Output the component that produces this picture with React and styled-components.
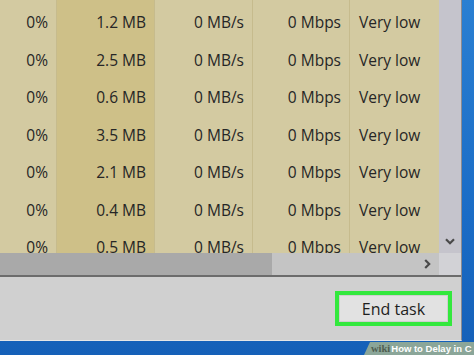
import React from 'react';
import styled, { createGlobalStyle } from 'styled-components';

const GlobalStyle = createGlobalStyle`
  html, body {
    margin: 0;
    padding: 0;
    overflow: hidden;
    background: #1a6cc6;
  }
`;

const rows = [
    { cpu: '0%', mem: '1.2 MB' },
    { cpu: '0%', mem: '2.5 MB' },
    { cpu: '0%', mem: '0.6 MB' },
    { cpu: '0%', mem: '3.5 MB' },
    { cpu: '0%', mem: '2.1 MB' },
    { cpu: '0%', mem: '0.4 MB' },
    { cpu: '0%', mem: '0.5 MB' },
];

const columns = [
    { key: 'cpu', width: 57, value: (r) => r.cpu },
    { key: 'mem', width: 98, value: (r) => r.mem, highlight: true },
    { key: 'disk', width: 98, value: () => '0 MB/s' },
    { key: 'net', width: 97, value: () => '0 Mbps' },
    { key: 'power', width: 90, value: () => 'Very low', left: true },
];

export default function App() {
    return (
        <>
            <GlobalStyle />
            <Screen>
                <Window>
                    <ListArea>
                        <Table>
                            {columns.map((col, i) => (
                                <Column
                                    key={col.key}
                                    $width={col.width}
                                    $highlight={col.highlight}
                                    $last={i === columns.length - 1}
                                >
                                    {rows.map((r, j) => (
                                        <Cell key={j} $left={col.left}>
                                            {col.value(r)}
                                        </Cell>
                                    ))}
                                </Column>
                            ))}
                        </Table>
                        <VScroll>
                            <Chevron viewBox="0 0 10 7" width="10" height="7">
                                <path d="M1 1.2 L5 5.2 L9 1.2" />
                            </Chevron>
                        </VScroll>
                        <HScroll>
                            <HThumb />
                            <HTrack>
                                <Chevron viewBox="0 0 7 10" width="7" height="10">
                                    <path d="M1.2 1 L5.2 5 L1.2 9" />
                                </Chevron>
                            </HTrack>
                        </HScroll>
                        <Corner />
                    </ListArea>
                    <Footer>
                        <EndTask>End task</EndTask>
                    </Footer>
                </Window>
                <Watermark>
                    <Wiki>wiki</Wiki>
                    <How>How to Delay in C</How>
                </Watermark>
            </Screen>
        </>
    );
}

const Screen = styled.div`
    position: relative;
    width: 474px;
    height: 355px;
    box-sizing: border-box;
    padding: 0 12px 14px 0;
    background: linear-gradient(180deg, #2a7fd2 0%, #1a6cc6 60%, #1560b8 100%);
    font-family: "Open Sans", "Noto Sans", sans-serif;
`;

const Window = styled.div`
    display: flex;
    flex-direction: column;
    height: 100%;
    background: #d0d0d0;
    border-right: 1px solid #8a8a90;
    border-bottom: 1px solid #e6e6e6;
    box-sizing: border-box;
`;

const ListArea = styled.div`
    display: grid;
    grid-template-columns: 1fr 22px;
    grid-template-rows: 253px 22px;
    border-bottom: 2px solid #6c6c6c;
`;

const Table = styled.div`
    display: flex;
    overflow: hidden;
`;

const Column = styled.div`
    width: ${(p) => p.$width}px;
    flex: none;
    box-sizing: border-box;
    padding-top: 4px;
    background: ${(p) => (p.$highlight ? '#cec088' : '#d3caa1')};
    border-right: ${(p) => (p.$last ? 'none' : '1px solid #c6bb8d')};
`;

const Cell = styled.div`
    height: 37.5px;
    line-height: 37.5px;
    font-size: 15.5px;
    color: #262626;
    white-space: nowrap;
    text-align: ${(p) => (p.$left ? 'left' : 'right')};
    padding: ${(p) => (p.$left ? '0 0 0 9px' : '0 8px 0 0')};
`;

const VScroll = styled.div`
    background: #c5c4cc;
    display: flex;
    align-items: flex-end;
    justify-content: center;
    padding-bottom: 8px;
`;

const Chevron = styled.svg`
    fill: none;
    stroke: #4a4a4a;
    stroke-width: 2.2;
`;

const HScroll = styled.div`
    display: flex;
`;

const HThumb = styled.div`
    width: 272px;
    background: #a9a9a9;
`;

const HTrack = styled.div`
    flex: 1;
    background: #c4c4c4;
    display: flex;
    align-items: center;
    justify-content: flex-end;
    padding-right: 8px;
`;

const Corner = styled.div`
    background: #d2d2d6;
`;

const Footer = styled.div`
    flex: 1;
    display: flex;
    justify-content: flex-end;
    align-items: flex-start;
    padding: 14px 9px 0 0;
`;

const EndTask = styled.button`
    width: 117px;
    height: 35px;
    box-sizing: border-box;
    border: 4px solid #33e83d;
    background: #e2e2e2;
    box-shadow: inset 0 0 0 1px #cfcfcf;
    font-family: "Open Sans", "Noto Sans", sans-serif;
    font-size: 16px;
    color: #1e1e1e;
    padding: 0;
`;

const Watermark = styled.div`
    position: absolute;
    right: 0;
    bottom: 0;
    width: 110px;
    height: 13px;
    display: flex;
    align-items: center;
    padding-left: 7px;
    box-sizing: border-box;
    background: rgba(150, 172, 150, 0.92);
    clip-path: polygon(6px 0, 100% 0, 100% 100%, 0 100%);
    font-family: "Liberation Sans", Arial, sans-serif;
    font-weight: bold;
    font-size: 9.5px;
    line-height: 13px;
    white-space: nowrap;
    overflow: hidden;
`;

const Wiki = styled.span`
    color: #4f5e50;
    font-family: "Liberation Serif", serif;
    font-size: 10.5px;
`;

const How = styled.span`
    color: #ffffff;
    margin-left: 1px;
`;
